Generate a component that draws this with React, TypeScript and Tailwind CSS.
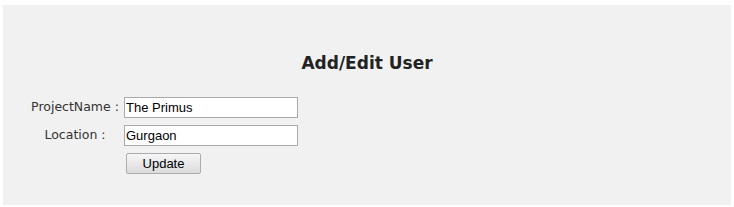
export default function App() {
  return (
    <div className="w-[734px] h-[207px] bg-white pt-[5px] px-[3px]">
      <div className="h-[200px] bg-[#f1f1f1] flex flex-col">
        <h2 className="mt-[46px] h-[24px] text-center text-[17px] leading-[24px] font-bold text-[#222] font-['DejaVu_Sans',sans-serif]">
          Add/Edit User
        </h2>
        <div className="mt-[22px] pl-[23px] flex flex-col gap-[7px] text-[12.5px] text-[#333] font-['DejaVu_Sans',sans-serif]">
          <div className="flex items-center h-[21px]">
            <label className="w-[98px] text-center">ProjectName :</label>
            <input
              defaultValue="The Primus"
              className="w-[174px] h-[21px] bg-white border border-[#a9a9a9] px-[1px] text-[13px] text-black font-['Liberation_Sans',Arial,sans-serif] outline-none"
            />
          </div>
          <div className="flex items-center h-[21px]">
            <label className="w-[98px] text-center">Location :</label>
            <input
              defaultValue="Gurgaon"
              className="w-[174px] h-[21px] bg-white border border-[#a9a9a9] px-[1px] text-[13px] text-black font-['Liberation_Sans',Arial,sans-serif] outline-none"
            />
          </div>
          <div className="flex items-center h-[21px]">
            <div className="w-[100px]" />
            <button className="w-[75px] h-[21px] rounded-[2px] border border-[#acacac] bg-gradient-to-b from-[#f6f6f6] to-[#dcdcdc] text-[13px] text-black font-['Liberation_Sans',Arial,sans-serif] leading-none">
              Update
            </button>
          </div>
        </div>
      </div>
    </div>
  )
}
